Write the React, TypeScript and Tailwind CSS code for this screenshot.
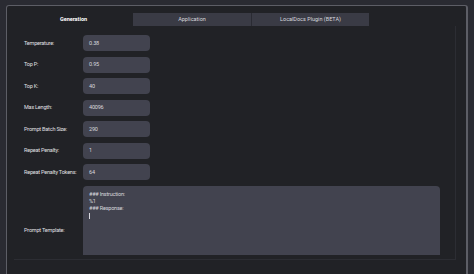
import React from 'react';

const rows: { label: string; value: string }[] = [
  { label: 'Temperature:', value: '0.38' },
  { label: 'Top P:', value: '0.95' },
  { label: 'Top K:', value: '40' },
  { label: 'Max Length:', value: '40096' },
  { label: 'Prompt Batch Size:', value: '290' },
  { label: 'Repeat Penalty:', value: '1' },
  { label: 'Repeat Penalty Tokens:', value: '64' },
];

const tabs = ['Generation', 'Application', 'LocalDocs Plugin (BETA)'];

const App: React.FC = () => {
  return (
    <div
      className="w-[474px] h-[274px] overflow-hidden bg-[#2a2b32] pt-[5px] pl-[6px] text-[#d4d4d8]"
      style={{ fontFamily: 'Roboto, "Liberation Sans", sans-serif' }}
    >
      {/* Settings dialog */}
      <div className="w-[462px] h-[290px] bg-[#212226] border-t-[1.5px] border-l-[1.5px] border-r-[2px] border-[#5d5e66] rounded-tl-[3px] rounded-tr-[3px] pt-[7px] pl-[7px] pr-[10px]">
        {/* Tabs */}
        <div className="flex h-[13px]">
          {tabs.map((t, i) => (
            <div
              key={t}
              className={`${i === 2 ? 'w-[117px]' : 'w-[119px]'} flex items-center justify-center text-[5.5px] ${
                i === 0 ? 'bg-[#212226] font-bold text-white' : 'bg-[#3a3b45] text-[#d8d8de]'
              } ${i === 1 ? 'border-r border-[#2a2b33]' : ''}`}
            >
              {t}
            </div>
          ))}
        </div>

        {/* Content panel */}
        <div className="h-[234px] border-r border-b border-[#2c2d33] pl-[10px] pt-[9px] tracking-[-0.2px]">
          <div className="flex flex-col gap-[5.5px]">
            {rows.map((r) => (
              <div key={r.label} className="flex items-center h-[16px]">
                <div className="w-[59px] text-[5.5px] text-[#e0e0e4] whitespace-nowrap">{r.label}</div>
                <div className="w-[67px] h-[16px] rounded-[4px] bg-[#42434f] flex items-center pl-[6px] text-[5.5px] text-[#d8d8de]">
                  {r.value}
                </div>
              </div>
            ))}
          </div>

          <div className="flex mt-[6px]">
            <div className="w-[59px] flex items-end pb-[21px] text-[5.5px] text-[#e0e0e4]">Prompt Template:</div>
            <div className="w-[357px] h-[69px] rounded-t-[4px] bg-[#42434f] pl-[6px] pt-[5px] text-[5.5px] leading-[7px] text-[#d8d8de]">
              <div>### Instruction:</div>
              <div>%1</div>
              <div>### Response:</div>
              <div className="w-[1px] h-[6px] bg-[#d8d8de] mt-[0.5px]" />
            </div>
          </div>
        </div>
      </div>
    </div>
  );
};

export default App;
